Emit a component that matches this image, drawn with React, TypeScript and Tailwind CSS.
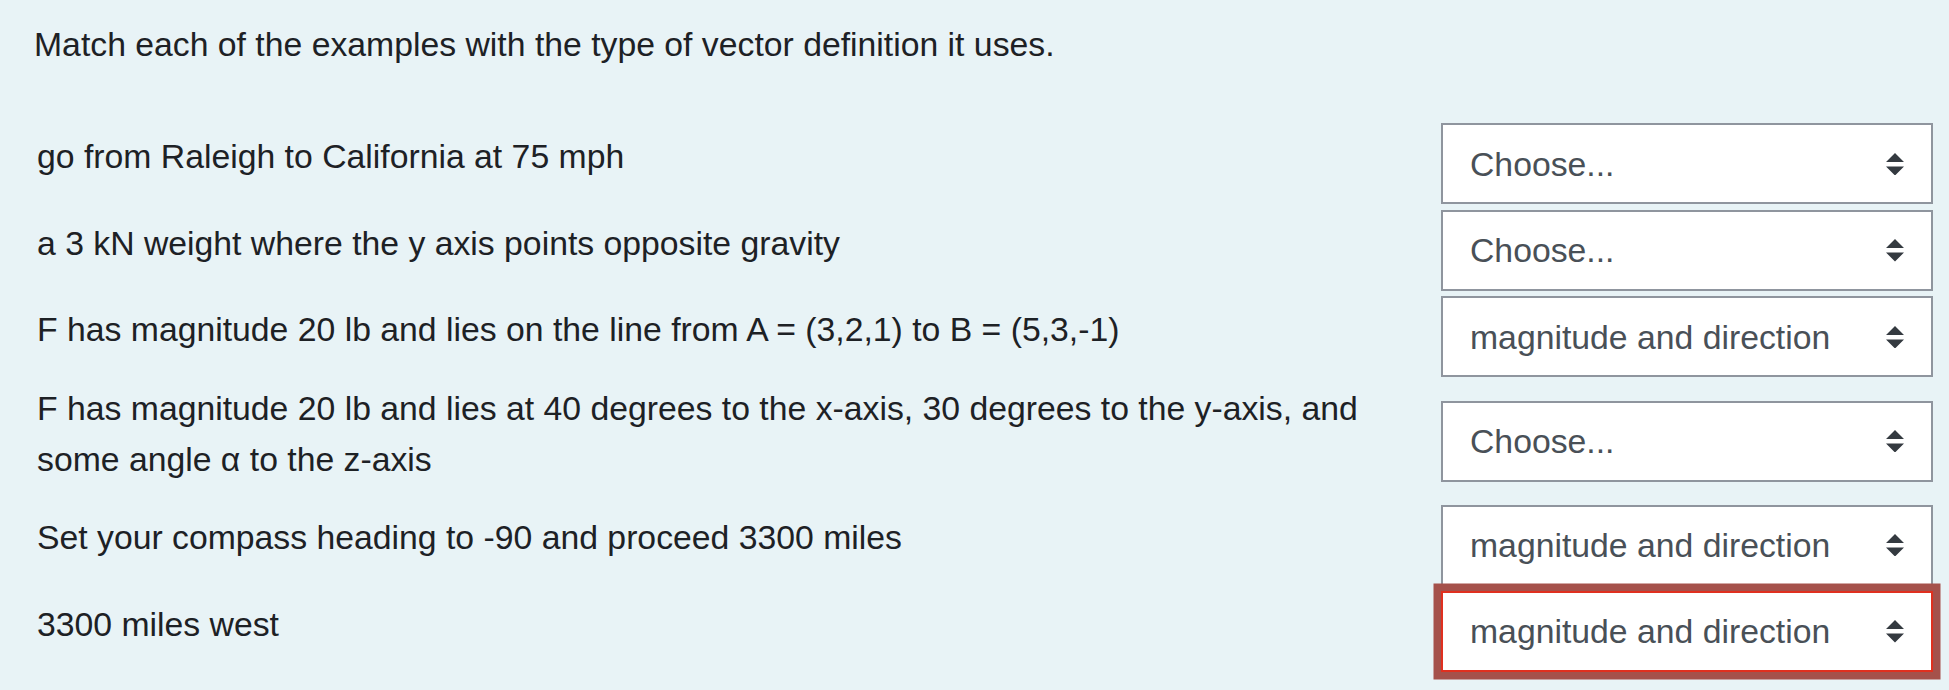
import React from "react";

const rows: { text: string; value: string; wrong?: boolean }[] = [
  { text: "go from Raleigh to California at 75 mph", value: "Choose..." },
  { text: "a 3 kN weight where the y axis points opposite gravity", value: "Choose..." },
  { text: "F has magnitude 20 lb and lies on the line from A = (3,2,1) to B = (5,3,-1)", value: "magnitude and direction" },
  {
    text: "F has magnitude 20 lb and lies at 40 degrees to the x-axis, 30 degrees to the y-axis, and some angle α to the z-axis",
    value: "Choose...",
  },
  { text: "Set your compass heading to -90 and proceed 3300 miles", value: "magnitude and direction" },
  { text: "3300 miles west", value: "magnitude and direction", wrong: true },
];

function Arrows() {
  return (
    <svg width="18" height="22.5" viewBox="0 0 4 5" className="shrink-0">
      <path fill="#343a40" d="M2 0L0 2h4zm0 5L0 3h4z" />
    </svg>
  );
}

function FakeSelect({ value, wrong }: { value: string; wrong?: boolean }) {
  return (
    <div
      className={
        wrong
          ? "flex h-[81px] w-[492px] shrink-0 items-center justify-between border-[2.25px] border-[#e0301f] bg-white pl-[27px] pr-[27px] text-[#495057] shadow-[0_0_0_7.5px_#a5514b]"
          : "flex h-[81px] w-[492px] shrink-0 items-center justify-between border-[2.25px] border-[#8f959e] bg-white pl-[27px] pr-[27px] text-[#495057]"
      }
    >
      <span className="whitespace-nowrap">{value}</span>
      <Arrows />
    </div>
  );
}

export default function App() {
  return (
    <div
      className="min-h-[690px] w-full bg-[#e8f3f6] text-[33.75px] leading-[1.5] text-[#1d2125]"
      style={{ fontFamily: '"Liberation Sans", Arial, sans-serif' }}
    >
      <div className="pl-[34px] pr-[16px] pt-[19px]">
        <p className="mb-[51px]">Match each of the examples with the type of vector definition it uses.</p>
      </div>
      <div className="flex flex-col pl-[37px] pr-[16px]">
        {rows.map((r, i) => (
          <div key={i} className="flex items-center py-[2.75px]">
            <div className="mb-[15px] flex-1 pr-[40px]">{r.text}</div>
            <FakeSelect value={r.value} wrong={r.wrong} />
          </div>
        ))}
      </div>
    </div>
  );
}
